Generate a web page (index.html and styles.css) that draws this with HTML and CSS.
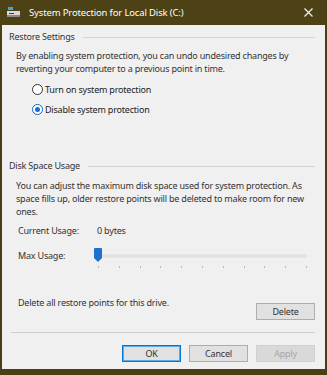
FILE: index.html
```html
<!DOCTYPE html>
<html lang="en">
<head>
    <meta charset="UTF-8">
    <meta name="viewport" content="width=device-width, initial-scale=1.0">
    <title>System Protection for Local Disk (C:)</title>
    <link rel="stylesheet" href="styles.css">
</head>
<body>

    <div class="window">
        <!-- Title bar -->
        <div class="titlebar">
            <svg class="title-icon" width="13" height="11" viewBox="0 0 13 11">
                <rect x="1" y="0" width="5" height="3" fill="#3fa6d8"/>
                <rect x="0" y="4" width="13" height="6" fill="#d9d9d9"/>
                <rect x="0" y="8" width="13" height="2" fill="#8a8a8a"/>
                <rect x="2" y="6" width="5" height="1" fill="#3a3a3a"/>
            </svg>
            <span class="title-text">System Protection for Local Disk (C:)</span>
            <svg class="close" width="9" height="9" viewBox="0 0 9 9">
                <path d="M0.5 0.5 L8.5 8.5 M8.5 0.5 L0.5 8.5" stroke="#ececec" stroke-width="1.3"/>
            </svg>
        </div>

        <div class="content">
            <!-- Restore Settings -->
            <div class="group-title">
                <span>Restore Settings</span>
                <div class="group-line"></div>
            </div>
            <p class="desc">By enabling system protection, you can undo undesired changes by reverting your computer to a previous point in time.</p>

            <div class="radios">
                <label class="radio"><span class="dot"></span>Turn on system protection</label>
                <label class="radio checked"><span class="dot"></span>Disable system protection</label>
            </div>

            <!-- Disk Space Usage -->
            <div class="group-title second">
                <span>Disk Space Usage</span>
                <div class="group-line"></div>
            </div>
            <p class="desc">You can adjust the maximum disk space used for system protection. As space fills up, older restore points will be deleted to make room for new ones.</p>

            <div class="usage-row">
                <span class="usage-label">Current Usage:</span>
                <span>0 bytes</span>
            </div>

            <div class="usage-row slider-row">
                <span class="usage-label">Max Usage:</span>
                <div class="slider">
                    <div class="track"></div>
                    <div class="thumb"></div>
                    <div class="ticks">
                        <i></i><i></i><i></i><i></i><i></i><i></i><i></i><i></i><i></i><i></i><i></i>
                    </div>
                </div>
            </div>

            <div class="delete-row">
                <span>Delete all restore points for this drive.</span>
                <button class="btn">Delete</button>
            </div>

            <div class="separator"></div>

            <div class="footer">
                <button class="btn default">OK</button>
                <button class="btn">Cancel</button>
                <button class="btn disabled">Apply</button>
            </div>
        </div>
    </div>

</body>
</html>
```

FILE: styles.css
```css
/* General */
body {
    margin: 0;
    background: #4a3f14;
    font-family: "Noto Sans", "Open Sans", sans-serif;
    font-size: 9px;
    letter-spacing: -0.2px;
    color: #1a1a1a;
}

.window {
    width: 323px;
    height: 369px;
    margin-left: 2px;
    background: #f0f0f0;
    display: flex;
    flex-direction: column;
}

/* Title bar */
.titlebar {
    height: 25px;
    margin-left: -2px;
    background: #4d4216;
    display: flex;
    align-items: center;
    padding: 0 12px 0 7px;
    color: #fff;
    flex-shrink: 0;
}

.title-icon {
    margin-right: 9px;
}

.title-text {
    flex: 1;
    font-size: 9.5px;
    letter-spacing: -0.15px;
}

/* Content */
.content {
    padding: 4px 10px 0 7px;
    display: flex;
    flex-direction: column;
    flex: 1;
}

.group-title {
    display: flex;
    align-items: center;
    gap: 8px;
    color: #333;
    height: 15px;
}

.group-title.second {
    margin-top: 42px;
}

.group-line {
    flex: 1;
    height: 1px;
    background: #d4d4d4;
    margin-top: 1px;
}

.desc {
    margin: 5px 0 0 7px;
    line-height: 13px;
    color: #333;
}

.group-title.second + .desc {
    margin-top: 6px;
}

/* Radios */
.radios {
    margin: 8px 0 0 23px;
    display: flex;
    flex-direction: column;
    gap: 7px;
}

.radio {
    display: flex;
    align-items: center;
    height: 13px;
    color: #222;
}

.dot {
    width: 11px;
    height: 11px;
    border: 1px solid #333;
    border-radius: 50%;
    background: #fff;
    margin-right: 2px;
    box-sizing: border-box;
    position: relative;
}

.radio.checked .dot {
    border-color: #0a68c8;
}

.radio.checked .dot::after {
    content: "";
    position: absolute;
    left: 2px;
    top: 2px;
    width: 5px;
    height: 5px;
    border-radius: 50%;
    background: #1a6fd0;
}

/* Usage */
.usage-row {
    display: flex;
    align-items: center;
    height: 13px;
    margin: 6px 0 0 9px;
    color: #333;
}

.usage-label {
    width: 79px;
    flex-shrink: 0;
}

.slider-row {
    margin-top: 12px;
    align-items: flex-start;
    height: 24px;
}

.slider {
    flex: 1;
    position: relative;
    height: 24px;
    margin-right: 8px;
}

.track {
    margin: 5px 0 0 4px;
    height: 2px;
    background: #e2e2e2;
    border: 1px solid #e6e6e6;
}

.thumb {
    position: absolute;
    left: -3px;
    top: -1px;
    width: 8px;
    height: 10px;
    background: #1f6fd0;
    border-radius: 1px 1px 0 0;
}

.thumb::after {
    content: "";
    position: absolute;
    left: 0;
    top: 10px;
    border-left: 4px solid transparent;
    border-right: 4px solid transparent;
    border-top: 4px solid #1f6fd0;
}

.ticks {
    display: flex;
    justify-content: space-between;
    margin: 8px 0 0 1px;
}

.ticks i {
    width: 1px;
    height: 2px;
    background: #b8b8b8;
}

/* Delete */
.delete-row {
    display: flex;
    justify-content: space-between;
    align-items: flex-start;
    margin: 23px 0 0 9px;
    line-height: 13px;
    color: #333;
}

.delete-row .btn {
    margin-top: 7px;
}

.separator {
    height: 1px;
    background: #cfcfcf;
    margin: 12px 0 0 2px;
}

/* Buttons */
.btn {
    width: 59px;
    height: 17px;
    padding: 0;
    border: 1px solid #adadad;
    background: #e1e1e1;
    font-family: "Noto Sans", "Open Sans", sans-serif;
    font-size: 9px;
    letter-spacing: -0.2px;
    color: #333;
}

.btn.default {
    border: 1px solid #0078d7;
    box-shadow: inset 0 0 0 1px #5ea9e6;
}

.btn.disabled {
    color: #a6a6a6;
    border-color: #d0d0d0;
    background: #d9d9d9;
}

.footer {
    display: flex;
    justify-content: flex-end;
    gap: 8px;
    margin-top: 12px;
}
```
